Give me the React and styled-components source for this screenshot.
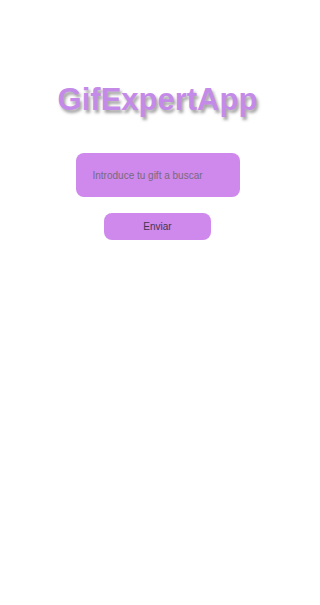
import React from 'react';
import styled, { createGlobalStyle } from 'styled-components';

const GlobalStyle = createGlobalStyle`
  html, body {
    margin: 0;
    padding: 0;
    background: #ffffff;
  }
  body {
    font-family: "Liberation Sans", Arial, sans-serif;
  }
`;

const Page = styled.div`
  display: flex;
  flex-direction: column;
  align-items: center;
  padding: 80px 5px 0 0;
  min-height: 605px;
  box-sizing: border-box;
`;

const Title = styled.h1`
  margin: 0;
  font-size: 31px;
  font-weight: 700;
  color: #c48ae8;
  text-shadow: 2px 3px 3px rgba(90, 90, 90, 0.55);
  line-height: 40px;
`;

const SearchForm = styled.form`
  display: flex;
  flex-direction: column;
  align-items: center;
  gap: 16px;
  margin-top: 33px;
`;

const SearchInput = styled.input`
  width: 164px;
  height: 44px;
  box-sizing: border-box;
  border: none;
  border-radius: 8px;
  background: #cf88ec;
  padding: 0 17px;
  font-family: "Liberation Sans", Arial, sans-serif;
  font-size: 10px;
  color: #333;
  outline: none;

  &::placeholder {
    color: #776a7e;
  }
`;

const SubmitButton = styled.button`
  width: 107px;
  height: 27px;
  border: none;
  border-radius: 8px;
  background: #cf88ec;
  font-family: "Liberation Sans", Arial, sans-serif;
  font-size: 10px;
  color: #45364f;
  cursor: pointer;
`;

export default function App() {
  return (
    <>
      <GlobalStyle />
      <Page>
        <Title>GifExpertApp</Title>
        <SearchForm onSubmit={(e) => e.preventDefault()}>
          <SearchInput type="text" placeholder="Introduce tu gift a buscar" />
          <SubmitButton type="submit">Enviar</SubmitButton>
        </SearchForm>
      </Page>
    </>
  );
}
